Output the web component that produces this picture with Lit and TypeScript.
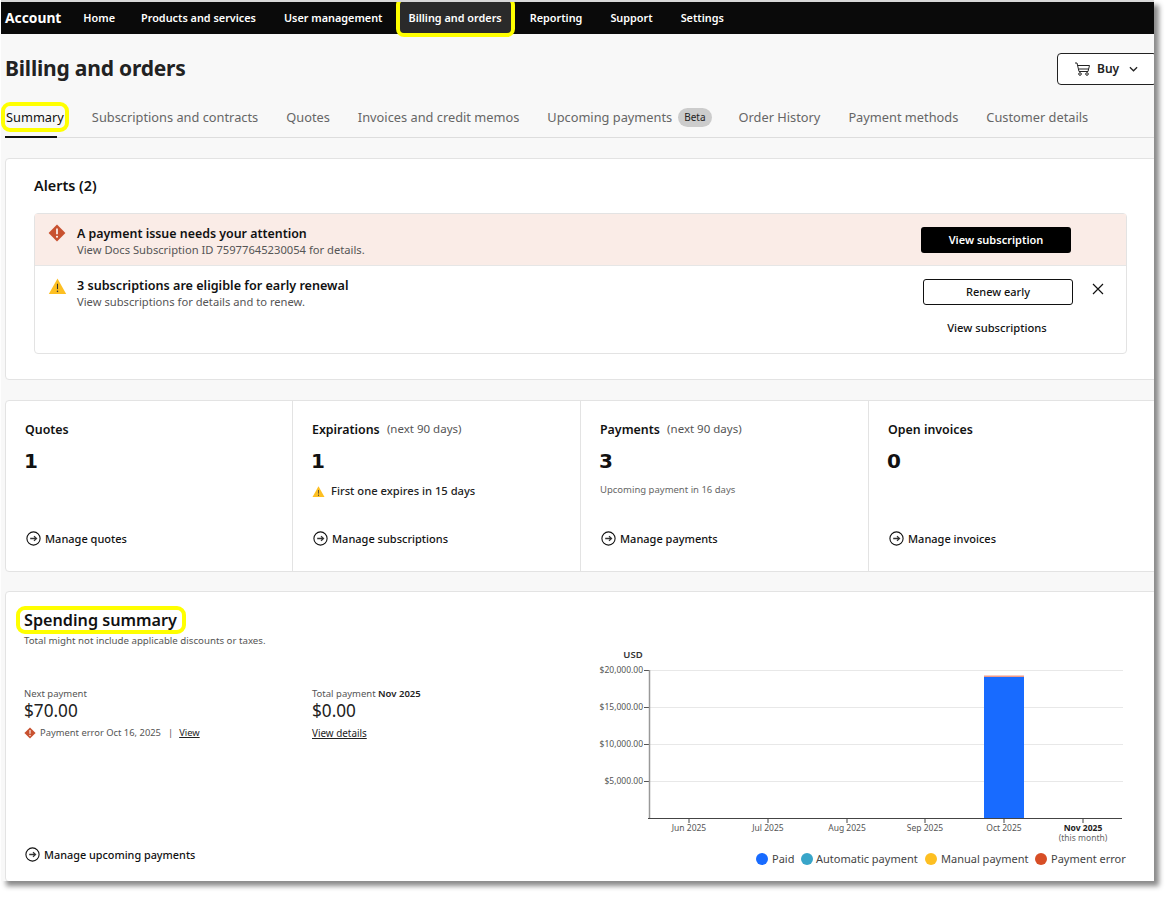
import { LitElement, html, css, svg } from "lit";
import { customElement } from "lit/decorators.js";

const arrow = html`<svg class="arr" viewBox="0 0 15 15" width="15" height="15"><circle cx="7.5" cy="7.5" r="6.6" fill="none" stroke="#111" stroke-width="1.1"/><path d="M4.2 7.5H10.4M8 5.1l2.5 2.4L8 9.9" fill="none" stroke="#333" stroke-width="1.3"/></svg>`;
const diamond = (s: number) => html`<svg viewBox="0 0 18 18" width=${s} height=${s}><path d="M9 .6 17.4 9 9 17.4.6 9z" fill="#c8512f"/><path d="M9 4.6v5.6" stroke="#fff" stroke-width="1.6"/><circle cx="9" cy="12.8" r="1" fill="#fff"/></svg>`;
const warn = (w: number, h: number) => html`<svg viewBox="0 0 20 18" width=${w} height=${h}><path d="M10 .5 19.8 18H.2z" fill="#fdbf22"/><path d="M10 6.5v6" stroke="#333" stroke-width="1.2"/><circle cx="10" cy="15" r=".9" fill="#333"/></svg>`;

const months = [["Jun 2025", 689], ["Jul 2025", 768], ["Aug 2025", 847], ["Sep 2025", 925], ["Oct 2025", 1004]] as [string, number][];
const grid = [["$20,000.00", 670], ["$15,000.00", 707], ["$10,000.00", 744], ["$5,000.00", 781]] as [string, number][];

@customElement("app-root")
export class AppRoot extends LitElement {
  static styles = css`
    :host { display: block; width: 1169px; height: 897px; background: #fff; font-family: "Noto Sans", sans-serif; color: #111; overflow: hidden; }
    * { box-sizing: border-box; }
    .frame { margin-left: 1px; width: 1153px; height: 881px; background: #f8f8f8; box-shadow: 5px 5px 5px #8a8a8a; border-top: 2px solid #d8d8d8; overflow: hidden; }
    nav { height: 32px; background: #0a0a0a; color: #fff; display: flex; align-items: center; padding: 0 0 2px 4px; font-size: 10.85px; font-weight: 600; white-space: nowrap; }
    .brand { font-size: 13.8px; font-weight: 700; margin-right: 22px; }
    .item { margin-right: 28px; }
    .item.home { margin-right: 26px; }
    .item.active { background: #2a2a2a; height: 32px; line-height: 34px; padding: 0 9px; margin: 0 19px 0 -11px; border-radius: 4px; outline: 4px solid #ffff00; position: relative; }
    .head { display: flex; justify-content: space-between; align-items: center; height: 70px; padding: 0 0 3px 4px; }
    h1 { margin: 0; font-size: 21px; letter-spacing: -.2px; line-height: 30px; font-weight: 700; color: #222; }
    .buy { width: 100px; height: 32px; margin: 2px -3px 0 0; border: 1px solid #222; border-radius: 4px; background: #fff; display: flex; align-items: center; gap: 6px; padding-left: 16px; font-size: 12px; font-weight: 600; color: #222; }
    .tabs { margin-left: 4px; height: 34px; border-bottom: 1px solid #ddd; display: flex; gap: 28px; font-size: 12.8px; color: #666; white-space: nowrap; align-items: center; padding-bottom: 7px; }
    .tabs .on { color: #111; position: relative; outline: 4px solid #ffff00; border-radius: 4px; outline-offset: 1px; padding: 1px 0; margin-left: 1px; }
    .tabs .on::after { content: ""; position: absolute; left: -1px; width: 52px; bottom: -11px; height: 2px; background: #111; }
    .up { display: inline-flex; align-items: center; margin-right: -1px; }
    .beta { background: #ccc; color: #222; border-radius: 10px; font-size: 10px; line-height: 19px; padding: 0 6px; margin-left: 6px; }
    .card { margin-left: 4px; background: #fff; border: 1px solid #e3e3e3; border-radius: 4px; width: 1160px; }
    .alerts { margin-top: 20px; height: 222px; padding: 18px 28px 0; }
    h2 { margin: 0 0 18px; font-size: 14.4px; line-height: 18px; font-weight: 600; }
    .abox { width: 1093px; height: 141px; border: 1px solid #e3e3e3; border-radius: 4px; }
    .row { display: grid; grid-template-columns: 42px 1fr 150px 55px; }
    .row.err { background: #faece7; height: 52px; border-bottom: 1px solid #e6e6e6; padding-top: 12px; }
    .row.warnr { height: 88px; padding-top: 12px; }
    .ic { padding-left: 13px; }
    .err .ic { margin-top: -2px; }
    .warnr .ic { margin-top: -1px; }
    .t { font-size: 12.4px; font-weight: 600; line-height: 16px; color: #111; }
    .warnr .t { font-size: 12.6px; }
    .s { font-size: 11.2px; line-height: 16px; color: #555; }
    .btn { width: 150px; height: 26px; margin-top: 1px; padding-bottom: 2px; border-radius: 3px; font-size: 11px; font-weight: 600; display: flex; align-items: center; justify-content: center; }
    .btn.k { background: #000; color: #fff; }
    .btn.o { border: 1px solid #111; font-weight: 500; margin-left: 2px; }
    .lnk { font-size: 11.2px; font-weight: 500; text-align: center; margin-top: 16px; margin-left: 2px; line-height: 14px; }
    .x { padding: 0 0 0 21px; }
    .stats { margin-top: 20px; height: 172px; display: grid; grid-template-columns: 287px 288px 288px 1fr; }
    .stat { border-right: 1px solid #e3e3e3; padding: 20px 0 0 19px; position: relative; }
    .stat:last-child { border: 0; }
    .st { font-size: 12.4px; font-weight: 600; line-height: 18px; }
    .st span { font-size: 11.5px; font-weight: 400; color: #555; margin-left: 4px; position: relative; top: -1px; }
    .num { font-size: 20px; font-weight: 700; line-height: 26px; margin: 9px 0 0 -1px; font-family: "DejaVu Sans", sans-serif; color: #111; }
    .nt { display: flex; align-items: center; gap: 6px; font-size: 11.2px; font-weight: 500; margin-top: 9px; line-height: 16px; color: #222; }
    .nt.g { font-size: 9.5px; font-weight: 400; color: #666; margin-top: 8px; }
    .mg { position: absolute; left: 20px; top: 130px; display: flex; align-items: center; gap: 4px; font-size: 11px; font-weight: 500; line-height: 15px; }
    .spend { margin-top: 19px; height: 291px; position: relative; border-radius: 4px; }
    .spend .mg { left: 19px; top: 255px; font-size: 10.85px; }
    .sp-h { position: absolute; left: 14px; top: 18px; font-size: 16.2px; font-weight: 600; line-height: 20px; padding: 0 5px 0 4px; outline: 4px solid #ffff00; border-radius: 5px; white-space: nowrap; }
    .sp-s { position: absolute; left: 18px; top: 42px; font-size: 9.7px; color: #555; line-height: 14px; white-space: nowrap; }
    .col { position: absolute; top: 95px; }
    .col.a { left: 18px; }
    .col.b { left: 306px; }
    .lab { font-size: 9.5px; color: #555; line-height: 14px; white-space: nowrap; }
    .lab b { font-weight: 600; color: #222; }
    .amt { font-size: 17.2px; line-height: 20px; color: #222; }
    .note { display: flex; align-items: center; font-size: 9.4px; color: #555; line-height: 14px; margin-top: 5px; white-space: nowrap; }
    .note u { color: #222; }
    .col.b .note { font-size: 9.9px; }
    .bar { margin: 0 6px 0 7px; }
    .gap { margin-left: 4px; }
    .chart { position: absolute; left: -6px; top: -592px; pointer-events: none; }
    .chart text { font-family: "Noto Sans", sans-serif; }
  `;

  render() {
    return html`<div class="frame">
      <nav>
        <span class="brand">Account</span>
        <span class="item home">Home</span><span class="item">Products and services</span><span class="item">User management</span>
        <span class="item active">Billing and orders</span>
        <span class="item">Reporting</span><span class="item">Support</span><span class="item">Settings</span>
      </nav>
      <div class="head">
        <h1>Billing and orders</h1>
        <div class="buy">
          <svg viewBox="0 0 17 16" width="17" height="16"><path d="M1 2h2l2 8.5h9l1.5-6H3.6M5 8h9.6" fill="none" stroke="#222" stroke-width="1"/><circle cx="6" cy="13" r="1.3" fill="none" stroke="#222"/><circle cx="13" cy="13" r="1.3" fill="none" stroke="#222"/></svg>
          <span>Buy</span>
          <svg viewBox="0 0 10 6" width="9" height="6" style="margin-left:4px"><path d="M1 1l4 4 4-4" fill="none" stroke="#222" stroke-width="1.4"/></svg>
        </div>
      </div>
      <div class="tabs">
        <span class="on">Summary</span><span>Subscriptions and contracts</span><span>Quotes</span><span>Invoices and credit memos</span>
        <span class="up">Upcoming payments<span class="beta">Beta</span></span><span>Order History</span><span>Payment methods</span><span>Customer details</span>
      </div>

      <div class="card alerts">
        <h2>Alerts (2)</h2>
        <div class="abox">
          <div class="row err">
            <div class="ic">${diamond(18)}</div>
            <div><div class="t">A payment issue needs your attention</div><div class="s">View Docs Subscription ID 75977645230054 for details.</div></div>
            <div class="btn k">View subscription</div><div></div>
          </div>
          <div class="row warnr">
            <div class="ic">${warn(19, 16)}</div>
            <div><div class="t">3 subscriptions are eligible for early renewal</div><div class="s">View subscriptions for details and to renew.</div></div>
            <div><div class="btn o">Renew early</div><div class="lnk">View subscriptions</div></div>
            <div class="x"><svg viewBox="0 0 12 12" width="12" height="12"><path d="M1 1l10 10M11 1 1 11" stroke="#111" stroke-width="1.2"/></svg></div>
          </div>
        </div>
      </div>

      <div class="card stats">
        <div class="stat"><div class="st">Quotes</div><div class="num">1</div><div class="mg">${arrow}Manage quotes</div></div>
        <div class="stat"><div class="st">Expirations <span>(next 90 days)</span></div><div class="num">1</div><div class="nt">${warn(13, 11)}First one expires in 15 days</div><div class="mg">${arrow}Manage subscriptions</div></div>
        <div class="stat"><div class="st">Payments <span>(next 90 days)</span></div><div class="num">3</div><div class="nt g">Upcoming payment in 16 days</div><div class="mg">${arrow}Manage payments</div></div>
        <div class="stat"><div class="st">Open invoices</div><div class="num">0</div><div class="mg">${arrow}Manage invoices</div></div>
      </div>

      <div class="card spend">
        <div class="sp-h">Spending summary</div>
        <div class="sp-s">Total might not include applicable discounts or taxes.</div>
        <div class="col a">
          <div class="lab">Next payment</div><div class="amt">$70.00</div>
          <div class="note">${diamond(12)}<span class="gap">Payment error Oct 16, 2025</span><span class="bar">|</span><u>View</u></div>
        </div>
        <div class="col b">
          <div class="lab">Total payment <b>Nov 2025</b></div><div class="amt">$0.00</div>
          <div class="note"><u>View details</u></div>
        </div>
        <div class="mg">${arrow}Manage upcoming payments</div>
        <svg class="chart" width="1169" height="897" viewBox="0 0 1169 897">
          <text x="633" y="658" font-size="9.5" font-weight="600" text-anchor="middle" fill="#333">USD</text>
          ${grid.map(([l, y]) => svg`<line x1="649" x2="1123" y1=${y + 0.5} y2=${y + 0.5} stroke="#e8e8e8"/><line x1="644" x2="649" y1=${y + 0.5} y2=${y + 0.5} stroke="#555"/><text x="643" y=${y + 3} font-size="8.5" text-anchor="end" fill="#555">${l}</text>`)}
          <line x1="649.5" x2="649.5" y1="670" y2="819" stroke="#999" stroke-width="1.5"/>
          <rect x="984" y="675.5" width="40" height="1.5" fill="#f09a88"/>
          <rect x="984" y="677" width="40" height="141.5" fill="#186bff"/>
          <line x1="648" x2="1122" y1="818.5" y2="818.5" stroke="#444"/>
          ${months.map(([l, x]) => svg`<line x1=${x} x2=${x} y1="818" y2="823" stroke="#444"/><text x=${x} y="831" font-size="8.5" text-anchor="middle" fill="#555">${l}</text>`)}
          <line x1="1083" x2="1083" y1="818" y2="823" stroke="#444"/>
          <text x="1083" y="831" font-size="8.5" font-weight="700" text-anchor="middle" fill="#222">Nov 2025</text>
          <text x="1083" y="841" font-size="8.5" text-anchor="middle" fill="#666">(this month)</text>
          ${[[762, "#186bff", 772, "Paid"], [807, "#38a5c9", 816, "Automatic payment"], [931, "#fdbf22", 941, "Manual payment"], [1041, "#d74e26", 1051, "Payment error"]].map(([cx, c, x, l]) => svg`<circle cx=${cx} cy="859" r="6" fill=${c}/><text x=${x} y="863" font-size="11" fill="#444">${l}</text>`)}
        </svg>
      </div>
    </div>`;
  }
}
